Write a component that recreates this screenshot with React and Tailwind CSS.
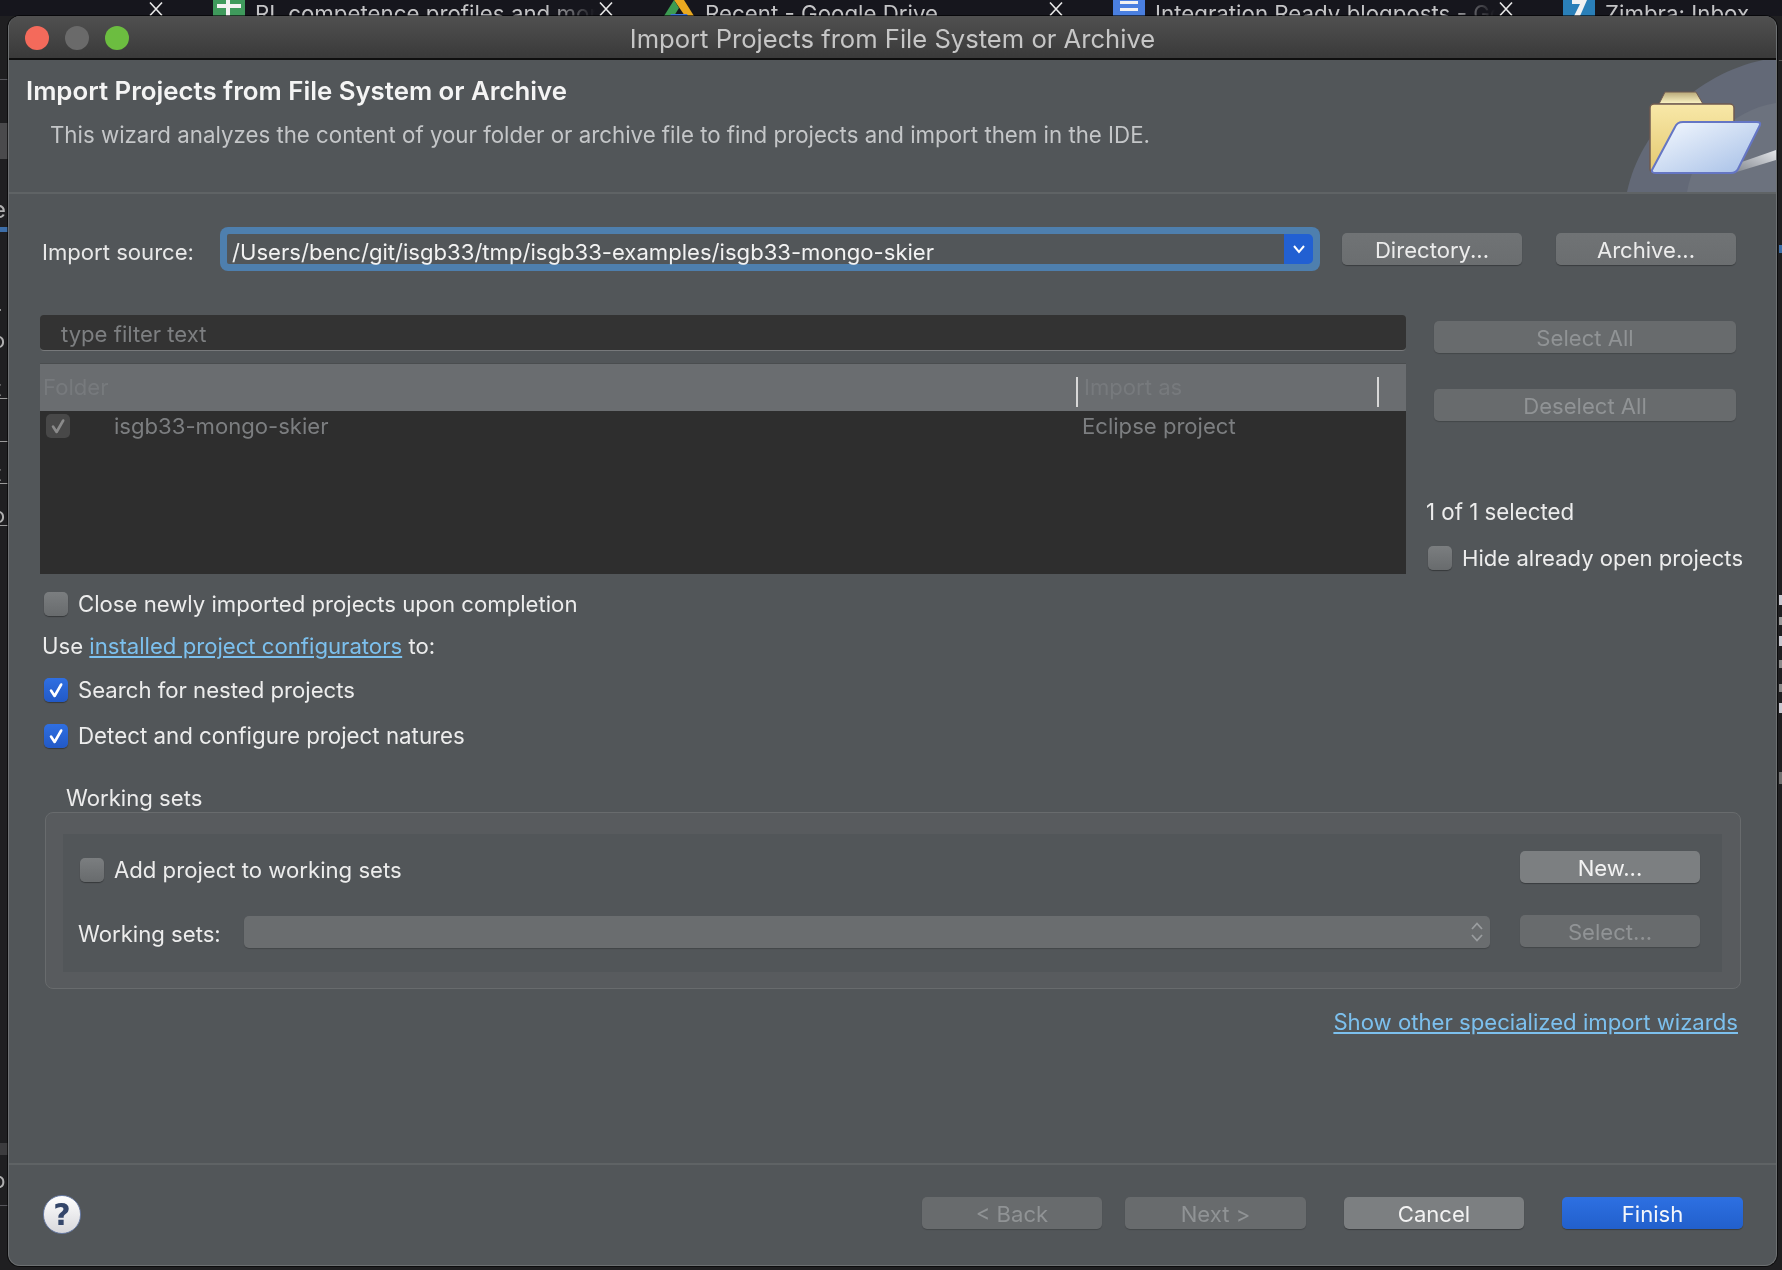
import React from "react";

const FONT = "font-['Inter','Liberation_Sans',sans-serif]";

function TabX() {
  return (
    <svg width="16" height="16" viewBox="0 0 16 16" className="mt-[1px] shrink-0">
      <path d="M2 1.5 L14 14.5 M14 1.5 L2 14.5" stroke="#e8e8e8" strokeWidth="1.6" />
    </svg>
  );
}

function SheetsIcon() {
  return (
    <svg width="32" height="16" viewBox="0 0 32 16" className="shrink-0">
      <rect width="32" height="16" fill="#3f9a5c" />
      <rect x="4" y="4" width="24" height="4" fill="#f2f2f2" />
      <rect x="13" y="0" width="4" height="16" fill="#f2f2f2" />
    </svg>
  );
}

function DriveIcon() {
  return (
    <svg width="32" height="16" viewBox="0 0 32 16" className="shrink-0">
      <path d="M11 0 L21 0 L31 16 L22 16 Z" fill="#e9a820" />
      <path d="M11 0 L16 8 L11 16 L1 16 Z" fill="#3c9c52" />
      <path d="M8 14 L24 14 L25 16 L7 16 Z" fill="#3e74d8" />
    </svg>
  );
}

function DocsIcon() {
  return (
    <svg width="32" height="16" viewBox="0 0 32 16" className="shrink-0">
      <rect width="32" height="16" fill="#4a7fe0" />
      <rect x="7" y="1" width="18" height="3" fill="#f2f2f2" />
      <rect x="7" y="8" width="18" height="3" fill="#f2f2f2" />
    </svg>
  );
}

function ZimbraIcon() {
  return (
    <svg width="32" height="16" viewBox="0 0 32 16" className="shrink-0">
      <rect width="32" height="16" fill="#2a7fb8" />
      <path d="M9 0 H24 L17 16 H11 L17 4 H9 Z" fill="#f2f2f2" />
    </svg>
  );
}

function Tab({ icon, label, fade }) {
  return (
    <div className="flex w-[450px] shrink-0 items-start">
      <TabX />
      <div className="ml-[49px]">{icon}</div>
      <div className="relative ml-[10px] w-[340px] overflow-hidden">
        <span className="block whitespace-nowrap text-[22.3px] leading-[27px] text-[#c4c4c6]">{label}</span>
        {fade && (
          <div className="absolute inset-y-0 right-0 w-[50px] bg-gradient-to-r from-transparent to-[#16161d]" />
        )}
      </div>
    </div>
  );
}

function Check({ color = "#ffffff" }) {
  return (
    <svg width="24" height="24" viewBox="0 0 24 24" fill="none">
      <path d="M7 12.5 L10.6 18 L17.2 6.5" stroke={color} strokeWidth="2.6" strokeLinecap="round" strokeLinejoin="round" />
    </svg>
  );
}

function Box({ checked, className = "" }) {
  return checked ? (
    <div className={`h-[24px] w-[24px] shrink-0 rounded-[5px] bg-gradient-to-b from-[#2f6fe2] to-[#2259c6] shadow-[0_1px_1px_rgba(0,0,0,0.35)] ${className}`}>
      <Check />
    </div>
  ) : (
    <div className={`h-[24px] w-[24px] shrink-0 rounded-[5px] bg-gradient-to-b from-[#7b7e80] to-[#686b6d] shadow-[0_1px_1px_rgba(0,0,0,0.35)] ${className}`} />
  );
}

function Btn({ children, className = "" }) {
  return (
    <div className={`flex h-[32px] shrink-0 items-center justify-center rounded-[5px] bg-gradient-to-b from-[#707375] to-[#6b6e70] pt-[1px] text-[22.1px] leading-[24px] text-[#ececec] shadow-[0_1px_1px_rgba(0,0,0,0.3)] ${className}`}>
      {children}
    </div>
  );
}

function BtnLight({ children, className = "" }) {
  return (
    <div className={`flex h-[32px] shrink-0 items-center justify-center rounded-[5px] bg-[#7c7f81] pt-[1px] text-[22.1px] leading-[24px] text-[#f2f2f2] shadow-[0_1px_1px_rgba(0,0,0,0.3)] ${className}`}>
      {children}
    </div>
  );
}

function BtnOff({ children, className = "" }) {
  return (
    <div className={`flex h-[32px] shrink-0 items-center justify-center rounded-[5px] bg-[#686b6d] pt-[1px] text-[22.1px] leading-[24px] text-[#909395] shadow-[0_1px_1px_rgba(0,0,0,0.18)] ${className}`}>
      {children}
    </div>
  );
}

function FolderArt() {
  return (
    <svg width="158" height="132" viewBox="0 0 158 132" className="absolute right-0 top-0">
      <defs>
        <linearGradient id="back" x1="0" y1="0" x2="0" y2="1">
          <stop offset="0" stopColor="#f8e8a8" />
          <stop offset="1" stopColor="#e4c870" />
        </linearGradient>
        <linearGradient id="front" x1="0" y1="0" x2="1" y2="1">
          <stop offset="0" stopColor="#f6faff" />
          <stop offset="1" stopColor="#a4bee6" />
        </linearGradient>
        <linearGradient id="tabg" x1="0" y1="0" x2="0" y2="1">
          <stop offset="0" stopColor="#b8a878" />
          <stop offset="1" stopColor="#fff8c8" />
        </linearGradient>
        <linearGradient id="wedge" x1="1" y1="0" x2="0" y2="1">
          <stop offset="0" stopColor="#e4e6ea" />
          <stop offset="1" stopColor="#7a7f87" />
        </linearGradient>
      </defs>
      <path d="M9 132 C22 70 78 14 145 0 L158 0 L158 132 Z" fill="#636977" />
      <path d="M69 132 C76 90 112 50 158 43 L158 132 Z" fill="#6c727e" />
      <path d="M158 90 L158 100 L112 114 L118 104 Z" fill="url(#wedge)" />
      <path d="M41 44 L47 32 L78 32 L85 44 Z" fill="url(#tabg)" stroke="#6f5a50" strokeWidth="1" />
      <rect x="32" y="44" width="84" height="69" rx="4" fill="url(#back)" stroke="#6f5a50" strokeWidth="1.5" />
      <path d="M57 67 Q59 62 65 62 L139 62 Q143 62 142 65 L120 109 Q118 113 113 113 L38 113 Q33 113 34 110 Z" fill="url(#front)" stroke="#6576c4" strokeWidth="2" />
    </svg>
  );
}

export default function App() {
  return (
    <div className={`relative h-[1270px] w-[1782px] overflow-hidden bg-[#1f1f21] blur-[0.35px] ${FONT}`}>
      {/* browser tab strip behind the dialog */}
      <div className="flex h-[16px] overflow-hidden bg-[#16161d] pl-[148px]">
        <Tab icon={<SheetsIcon />} label="RL competence profiles and more" fade />
        <Tab icon={<DriveIcon />} label="Recent - Google Drive" />
        <Tab icon={<DocsIcon />} label="Integration Ready blogposts - Google" fade />
        <Tab icon={<ZimbraIcon />} label="Zimbra: Inbox" />
      </div>

      {/* what shows of the page left of the dialog */}
      <div className="absolute left-0 top-[79px] flex w-[8px] flex-col overflow-hidden text-[#b0b0b0]">
        <div className="h-[1px] bg-[#55555a]" />
        <div className="mt-[43px] h-[36px] bg-[#4a4a4c]" />
        <div className="mt-[39px] h-[26px] overflow-hidden text-[24px] leading-[24px]"><span className="ml-[-8px]">e</span></div>
        <div className="mt-[3px] h-[5px] bg-[#3d6ea8]" />
        <div className="mt-[71px] h-[20px] overflow-hidden text-[22px] leading-[20px]"><span className="ml-[-7px]">r</span></div>
        <div className="mt-[7px] h-[20px] overflow-hidden text-[22px] leading-[20px]"><span className="ml-[-8px]">o</span></div>
        <div className="mt-[28px] h-[21px] overflow-hidden border-b border-[#9a9a9a] text-[22px] leading-[20px]"><span className="ml-[-6px]">t</span></div>
        <div className="mt-[42px] h-[1px] bg-[#9a9a9a]" />
        <div className="mt-[21px] h-[21px] overflow-hidden border-b border-[#9a9a9a] text-[22px] leading-[20px]"><span className="ml-[-6px]">t</span></div>
        <div className="mt-[21px] h-[21px] overflow-hidden border-b border-[#9a9a9a] text-[22px] leading-[20px]"><span className="ml-[-8px]">o</span></div>
        <div className="mt-[617px] h-[12px] bg-[#3c3c3e]" />
        <div className="mt-[15px] h-[20px] overflow-hidden text-[22px] leading-[20px]"><span className="ml-[-8px]">b</span></div>
        <div className="mt-[15px] h-[1px] bg-[#55555a]" />
      </div>

      {/* what shows of the page right of the dialog */}
      <div className="absolute right-0 top-[60px] flex w-[3px] flex-col">
        <div className="h-[1px] bg-[#555]" />
        <div className="mt-[184px] h-[8px] bg-[#3d6ea8]" />
        <div className="mt-[342px] h-[10px] bg-[#c8c8d0]" />
        <div className="mt-[12px] h-[8px] bg-[#9a9a9a]" />
        <div className="mt-[11px] h-[10px] bg-[#c8c8d0]" />
        <div className="mt-[14px] h-[8px] bg-[#8a8a8a]" />
        <div className="mt-[16px] h-[8px] bg-[#8a8a8a]" />
        <div className="mt-[11px] h-[10px] bg-[#c8c8d0]" />
        <div className="mt-[59px] h-[12px] bg-[#707070]" />
      </div>

      {/* the dialog window */}
      <div className="absolute left-[8px] top-[16px] flex h-[1250px] w-[1769px] flex-col overflow-hidden rounded-[12px] border-x border-b border-[#6d7072] bg-[#525659] shadow-[0_0_0_1px_rgba(0,0,0,0.6)]">
        {/* title bar */}
        <div className="relative flex h-[44px] shrink-0 items-center justify-center border-b-2 border-[#0f0f0f] bg-gradient-to-b from-[#505050] to-[#3a3a3a] pt-[3px]">
          <div className="absolute left-[16px] top-[10px] flex gap-[16px]">
            <div className="h-[24px] w-[24px] rounded-full bg-[#f46a5b]" />
            <div className="h-[24px] w-[24px] rounded-full bg-[#6a6a6a]" />
            <div className="h-[24px] w-[24px] rounded-full bg-[#6cbd40]" />
          </div>
          <span className="text-[25.6px] leading-[30px] text-[#c6c6c6]">Import Projects from File System or Archive</span>
        </div>

        {/* wizard header */}
        <div className="relative h-[134px] shrink-0 border-b-2 border-[#5f6365] pl-[17px] pt-[18px]">
          <FolderArt />
          <div className="text-[25.8px] font-semibold leading-[26px] text-[#f4f4f4]">Import Projects from File System or Archive</div>
          <div className="ml-[24px] mt-[18px] text-[22.27px] leading-[26px] text-[#c4c6c8]">
            This wizard analyzes the content of your folder or archive file to find projects and import them in the IDE.
          </div>
        </div>

        {/* import source row */}
        <div className="mt-[33px] flex h-[44px] shrink-0 items-center pl-[33px]">
          <span className="w-[178px] pt-[5px] text-[22.1px] leading-[24px] text-[#e8e8e8]">Import source:</span>
          <div className="flex h-[44px] w-[1100px] rounded-[8px] bg-[#4e7fae] p-[7px]">
            <div className="flex h-[30px] flex-1 items-center rounded-l-[2px] bg-[#525659] pl-[5px] pt-[5px] text-[22.1px] leading-[24px] text-[#f2f2f2]">
              /Users/benc/git/isgb33/tmp/isgb33-examples/isgb33-mongo-skier
            </div>
            <div className="flex h-[30px] w-[29px] items-center justify-center rounded-r-[5px] bg-[#2260d2]">
              <svg width="14" height="10" viewBox="0 0 14 10" fill="none">
                <path d="M2 2 L7 8 L12 2" stroke="#ffffff" strokeWidth="2" />
              </svg>
            </div>
          </div>
          <Btn className="ml-[22px] w-[180px]">Directory...</Btn>
          <Btn className="ml-[34px] w-[180px]">Archive...</Btn>
        </div>

        {/* filter, table and side buttons */}
        <div className="mt-[44px] flex shrink-0 pl-[31px]">
          <div className="flex w-[1366px] flex-col">
            <div className="flex h-[36px] items-center rounded-[4px] border-b border-[#77797b] bg-[#333333] pl-[21px] pt-[3px] text-[22.1px] leading-[24px] text-[#7d7f81]">
              type filter text
            </div>
            <div className="relative mt-[12px] flex h-[48px] items-center border-t border-[#4a4d4f] bg-[#6a6d70] pb-[2px] pl-[3px] text-[22.1px] leading-[24px] text-[#777a7d]">
              <span className="w-[1041px]">Folder</span>
              <span>Import as</span>
              <div className="absolute left-[1036px] top-[13px] h-[30px] w-[2px] bg-[#d8d8d8]" />
              <div className="absolute left-[1337px] top-[13px] h-[30px] w-[2px] bg-[#d8d8d8]" />
            </div>
            <div className="h-[163px] bg-[#2e2e2e] pl-[6px] pt-[3px]">
              <div className="flex h-[24px] items-center text-[22.1px] leading-[24px] text-[#7c7e80]">
                <div className="h-[24px] w-[24px] rounded-[5px] bg-[#484848]">
                  <Check color="#8a8a8a" />
                </div>
                <span className="ml-[44px] w-[968px]">isgb33-mongo-skier</span>
                <span>Eclipse project</span>
              </div>
            </div>
          </div>
          <div className="ml-[20px] flex flex-col">
            <BtnOff className="ml-[8px] mt-[6px] w-[302px]">Select All</BtnOff>
            <BtnOff className="ml-[8px] mt-[36px] w-[302px]">Deselect All</BtnOff>
            <div className="mt-[79px] h-[24px] text-[22.3px] leading-[24px] text-[#ececec]">1 of 1 selected</div>
            <div className="ml-[2px] mt-[22px] flex items-center">
              <Box />
              <span className="ml-[10px] whitespace-nowrap text-[22.1px] leading-[24px] text-[#ececec]">Hide already open projects</span>
            </div>
          </div>
        </div>

        {/* options */}
        <div className="ml-[35px] mt-[18px] flex shrink-0 items-center">
          <Box />
          <span className="ml-[10px] text-[22.15px] leading-[24px] text-[#ececec]">Close newly imported projects upon completion</span>
        </div>
        <div className="ml-[33px] mt-[18px] h-[24px] shrink-0 text-[22.15px] leading-[24px] text-[#ececec]">
          Use <span className="text-[#7cc0ee] underline underline-offset-2">installed project configurators</span> to:
        </div>
        <div className="ml-[35px] mt-[20px] flex shrink-0 items-center">
          <Box checked />
          <span className="ml-[10px] text-[22.15px] leading-[24px] text-[#ececec]">Search for nested projects</span>
        </div>
        <div className="ml-[35px] mt-[22px] flex shrink-0 items-center">
          <Box checked />
          <span className="ml-[10px] text-[22.3px] leading-[24px] text-[#ececec]">Detect and configure project natures</span>
        </div>

        {/* working sets */}
        <div className="ml-[57px] mt-[38px] h-[24px] shrink-0 text-[22.15px] leading-[24px] text-[#ececec]">Working sets</div>
        <div className="ml-[36px] mt-[2px] h-[177px] w-[1696px] shrink-0 rounded-[8px] border border-[#686b6d] bg-[#585b5e] px-[17px] pt-[21px]">
          <div className="h-[138px] w-[1659px] bg-[#525659] pl-[17px] pr-[22px] pt-[17px]">
            <div className="flex h-[32px] items-start justify-between">
              <div className="mt-[7px] flex items-center">
                <Box />
                <span className="ml-[10px] text-[22.15px] leading-[24px] text-[#ececec]">Add project to working sets</span>
              </div>
              <BtnLight className="w-[180px]">New...</BtnLight>
            </div>
            <div className="-ml-[2px] mt-[32px] flex h-[33px] items-start">
              <span className="mt-[7px] w-[166px] text-[22.15px] leading-[24px] text-[#ececec]">Working sets:</span>
              <div className="mt-[1px] flex h-[32px] w-[1246px] items-center justify-end rounded-[5px] bg-[#6a6d6f] pr-[6px] shadow-[0_1px_1px_rgba(0,0,0,0.18)]">
                <svg width="14" height="22" viewBox="0 0 14 22" fill="none">
                  <path d="M2 8 L7 2.5 L12 8 M2 14 L7 19.5 L12 14" stroke="#9a9d9f" strokeWidth="1.8" />
                </svg>
              </div>
              <BtnOff className="ml-[30px] w-[180px]">Select...</BtnOff>
            </div>
          </div>
        </div>

        <div className="mr-[38px] mt-[21px] h-[24px] shrink-0 self-end text-[22.15px] leading-[24px] text-[#7cc0ee] underline underline-offset-2">
          Show other specialized import wizards
        </div>

        {/* footer */}
        <div className="mt-auto flex h-[102px] shrink-0 items-start border-t-2 border-[#5f6365] pl-[34px] pt-[32px]">
          <div className="-mt-[2px] flex h-[39px] w-[38px] shrink-0 items-center justify-center rounded-full border-[1.5px] border-[#6a7ca4] bg-gradient-to-b from-white to-[#d8d8dc] font-['DejaVu_Sans',sans-serif] text-[30px] font-bold leading-[34px] text-[#34466a]">
            ?
          </div>
          <BtnOff className="ml-[841px] w-[180px]">&lt; Back</BtnOff>
          <BtnOff className="ml-[23px] w-[181px]">Next &gt;</BtnOff>
          <BtnLight className="ml-[38px] w-[180px]">Cancel</BtnLight>
          <div className="ml-[38px] flex h-[32px] w-[181px] shrink-0 items-center justify-center rounded-[5px] bg-gradient-to-b from-[#2d70e2] to-[#2260cc] pt-[1px] text-[22.1px] leading-[24px] text-[#f4f6fa] shadow-[0_1px_1px_rgba(0,0,0,0.3)]">
            Finish
          </div>
        </div>
      </div>
    </div>
  );
}
